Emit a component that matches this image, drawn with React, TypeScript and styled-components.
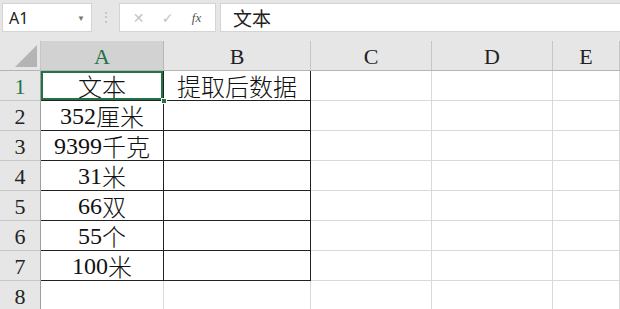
import styled, { createGlobalStyle } from "styled-components";

const GlobalStyle = createGlobalStyle`
  html, body {
    margin: 0;
    padding: 0;
    background: #e6e6e6;
    overflow: hidden;
  }
  * {
    box-sizing: border-box;
  }
`;

const Page = styled.div`
  width: 620px;
  height: 309px;
  display: flex;
  flex-direction: column;
  background: #e6e6e6;
`;

const Toolbar = styled.div`
  height: 41px;
  display: flex;
  align-items: flex-start;
  padding: 3px 0 0 2px;
  background: #e6e6e6;
`;

const NameBox = styled.div`
  width: 90px;
  height: 29px;
  background: #fff;
  border: 1px solid #d4d4d4;
  display: flex;
  align-items: center;
  justify-content: space-between;
  padding: 0 6px 0 6px;
  font-family: "Noto Sans", "Open Sans", sans-serif;
  font-size: 16px;
  color: #222;
`;

const Caret = styled.span`
  font-size: 8px;
  color: #777;
`;

const Dots = styled.div`
  width: 27px;
  height: 29px;
  display: flex;
  align-items: center;
  justify-content: center;
  color: #bdbdbd;
  font-size: 14px;
`;

const ButtonBox = styled.div`
  width: 97px;
  height: 29px;
  background: #fff;
  border: 1px solid #d4d4d4;
  display: flex;
  align-items: center;
  justify-content: space-around;
  padding: 0 4px;
  margin-right: 4px;
`;

const ToolIcon = styled.span<{ $italic?: boolean }>`
  width: 22px;
  display: flex;
  justify-content: center;
  align-items: center;
  color: ${(p) => (p.$italic ? "#555" : "#c4c4c4")};
  font-family: ${(p) => (p.$italic ? '"Liberation Serif", serif' : '"DejaVu Sans", sans-serif')};
  font-style: ${(p) => (p.$italic ? "italic" : "normal")};
  font-size: ${(p) => (p.$italic ? "13px" : "14px")};
`;

const FormulaInput = styled.div`
  flex: 1;
  height: 29px;
  background: #fff;
  border: 1px solid #d4d4d4;
  border-right: none;
  display: flex;
  align-items: center;
  padding-left: 12px;
  font-family: "Noto Sans CJK SC", sans-serif;
  font-size: 19px;
  color: #222;
`;

const Sheet = styled.div`
  display: grid;
  grid-template-columns: 41px 123px 147px 121px 121px 1fr;
  grid-auto-rows: 30px;
  background: #fff;
  flex: 1;
  overflow: hidden;
`;

const Corner = styled.div`
  background: #e6e6e6;
  border-right: 1px solid #c6c6c6;
  border-bottom: 1px solid #b4b4b4;
  position: relative;
  svg {
    position: absolute;
    right: 3px;
    bottom: 3px;
  }
`;

const ColHead = styled.div<{ $active?: boolean }>`
  background: ${(p) => (p.$active ? "#d2d2d2" : "#e6e6e6")};
  border-right: 1px solid ${(p) => (p.$active ? "#b8b8b8" : "#c6c6c6")};
  border-bottom: 1px solid #b4b4b4;
  display: flex;
  align-items: center;
  justify-content: center;
  font-family: "Liberation Serif", serif;
  font-size: 22px;
  color: ${(p) => (p.$active ? "#217346" : "#222")};
  padding-top: 2px;
`;

const RowHead = styled.div<{ $active?: boolean }>`
  background: #e6e6e6;
  border-right: 1px solid #9e9e9e;
  border-bottom: 1px solid #c6c6c6;
  display: flex;
  align-items: center;
  justify-content: center;
  font-family: "Liberation Serif", serif;
  font-size: 22px;
  color: ${(p) => (p.$active ? "#217346" : "#222")};
  padding-top: 2px;
`;

const Cell = styled.div<{ $boxed?: boolean; $selected?: boolean }>`
  position: relative;
  border-right: 1px solid ${(p) => (p.$boxed ? "#222" : "#d9d9d9")};
  border-bottom: 1px solid ${(p) => (p.$boxed ? "#222" : "#d9d9d9")};
  display: flex;
  align-items: center;
  justify-content: center;
  font-size: 24px;
  line-height: 1;
  color: #111;
  white-space: nowrap;
  padding-top: 1px;
  box-shadow: ${(p) => (p.$selected ? "inset 0 0 0 2px #217346" : "none")};
`;

const Num = styled.span`
  font-family: "Liberation Serif", serif;
`;

const Han = styled.span`
  font-family: "Noto Sans CJK SC", sans-serif;
  font-weight: 300;
`;

const FillHandle = styled.span`
  position: absolute;
  right: -4px;
  bottom: -4px;
  width: 6px;
  height: 6px;
  background: #217346;
  border: 1px solid #fff;
  z-index: 2;
`;

const columns = ["A", "B", "C", "D", "E"];

const rows: [string, string][] = [
  ["文本", "提取后数据"],
  ["352厘米", ""],
  ["9399千克", ""],
  ["31米", ""],
  ["66双", ""],
  ["55个", ""],
  ["100米", ""],
  ["", ""],
];

function CellText({ text }: { text: string }) {
  const m = text.match(/^(\d*)(.*)$/) || ["", "", text];
  return (
    <>
      {m[1] && <Num>{m[1]}</Num>}
      {m[2] && <Han>{m[2]}</Han>}
    </>
  );
}

export default function App() {
  return (
    <>
      <GlobalStyle />
      <Page>
        <Toolbar>
          <NameBox>
            A1
            <Caret>▼</Caret>
          </NameBox>
          <Dots>⋮</Dots>
          <ButtonBox>
            <ToolIcon>✕</ToolIcon>
            <ToolIcon>✓</ToolIcon>
            <ToolIcon $italic>fx</ToolIcon>
          </ButtonBox>
          <FormulaInput>文本</FormulaInput>
        </Toolbar>
        <Sheet>
          <Corner>
            <svg width="22" height="22" viewBox="0 0 22 22">
              <polygon points="22,0 22,22 0,22" fill="#b4b4b4" />
            </svg>
          </Corner>
          {columns.map((c, i) => (
            <ColHead key={c} $active={i === 0}>
              {c}
            </ColHead>
          ))}
          {rows.map((r, ri) => {
            const boxed = ri < 7;
            return [
              <RowHead key={`h${ri}`} $active={ri === 0}>
                {ri + 1}
              </RowHead>,
              <Cell key={`a${ri}`} $boxed={boxed} $selected={ri === 0}>
                <CellText text={r[0]} />
                {ri === 0 && <FillHandle />}
              </Cell>,
              <Cell key={`b${ri}`} $boxed={boxed}>
                <CellText text={r[1]} />
              </Cell>,
              <Cell key={`c${ri}`} />,
              <Cell key={`d${ri}`} />,
              <Cell key={`e${ri}`} />,
            ];
          })}
        </Sheet>
      </Page>
    </>
  );
}
